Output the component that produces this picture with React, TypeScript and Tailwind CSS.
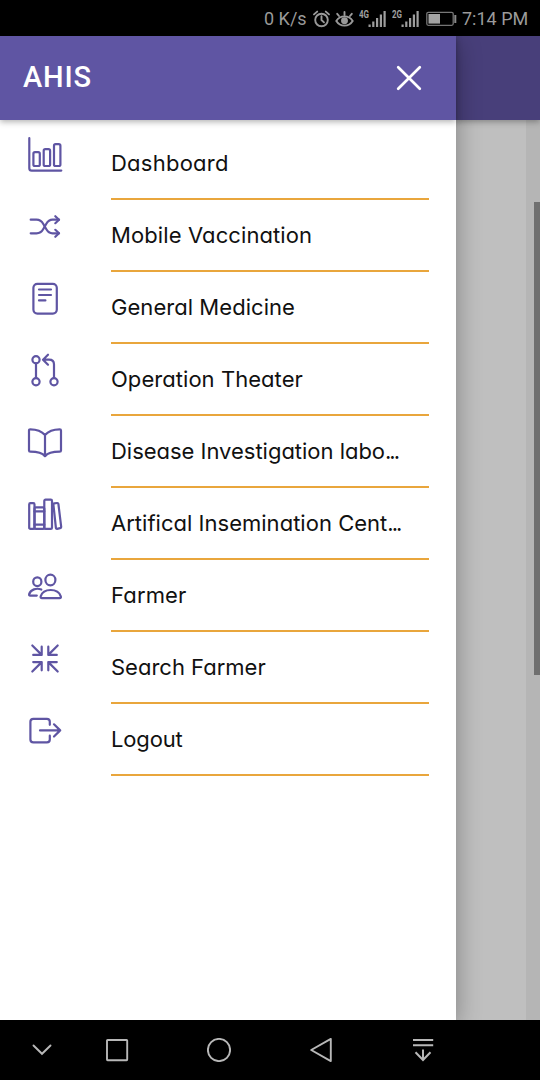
import type { ReactNode } from 'react';
import clsx from 'clsx';

type MenuItem = {
  label: string;
  truncated?: boolean;
  tracking: string;
  icon: ReactNode;
};

const menuItems: MenuItem[] = [
  {
    label: 'Dashboard',
    tracking: 'tracking-[0.24px]',
    icon: (
      <>
        <path d="M2.3 1.2V31.2Q2.3 33.6 4.7 33.6H34.3" />
        <rect x="6.4" y="15.2" width="6.4" height="13.8" rx="1.6" />
        <rect x="16.7" y="12.2" width="6.4" height="16.8" rx="1.6" />
        <rect x="27" y="7.2" width="6.4" height="21.8" rx="1.6" />
      </>
    ),
  },
  {
    label: 'Mobile Vaccination',
    tracking: 'tracking-[0.1px]',
    icon: (
      <>
        <path d="M3.7 10.7H9.5C13 10.7 14.8 12.3 16.3 15L19.2 20C20.7 22.6 22.5 24.3 25.5 24.3H32" />
        <path d="M3.7 24.3H9.5C13 24.3 14.8 22.7 16.3 20L19.2 15C20.7 12.4 22.5 10.7 25.5 10.7H32" />
        <path d="M28.3 7.2L32 10.7L28.3 14.2M28.3 20.8L32 24.3L28.3 27.8" />
      </>
    ),
  },
  {
    label: 'General Medicine',
    tracking: 'tracking-[0.05px]',
    icon: (
      <>
        <rect x="6.4" y="2.8" width="23.4" height="29.8" rx="4" />
        <path d="M12 8.5H24M12 14H24M12 19.4H18.4" />
      </>
    ),
  },
  {
    label: 'Operation Theater',
    tracking: 'tracking-[0.05px]',
    icon: (
      <>
        <circle cx="9" cy="6.7" r="3.6" />
        <circle cx="9" cy="28.7" r="3.6" />
        <circle cx="27" cy="28.7" r="3.6" />
        <path d="M9 10.3V25.1M27 25.1V11.5Q27 6.7 22 6.7H16.2M21 1.7L16 6.7L21 11.7" />
      </>
    ),
  },
  {
    label: 'Disease Investigation labo',
    truncated: true,
    tracking: 'tracking-[-0.02px]',
    icon: (
      <path d="M18 10C14.5 6 9 4.3 3.3 4.3Q2 4.3 2 5.6V25.4Q2 26.7 3.3 26.7C10 26.7 15 27.5 18 31.2C21 27.5 26 26.7 32.7 26.7Q34 26.7 34 25.4V5.6Q34 4.3 32.7 4.3C27 4.3 21.5 6 18 10ZM18 10V31" />
    ),
  },
  {
    label: 'Artifical Insemination Cent',
    truncated: true,
    tracking: 'tracking-[0.02px]',
    icon: (
      <>
        <rect x="2.2" y="6.2" width="5.3" height="25.7" rx="1.2" />
        <rect x="7.5" y="10.3" width="9.8" height="21.6" rx="1.2" />
        <path d="M7.5 14.3H17.3M7.5 27.7H17.3" />
        <rect x="17.3" y="2.7" width="7.7" height="29.2" rx="1.2" />
        <path d="M26.4 7.5Q26.2 6.4 27.3 6.3L30.2 6Q31.2 5.9 31.4 7L34.2 29.8Q34.3 31 33.2 31.2L30.1 31.8Q29 32 28.9 30.9Z" />
      </>
    ),
  },
  {
    label: 'Farmer',
    tracking: 'tracking-[0.15px]',
    icon: (
      <>
        <ellipse cx="10.3" cy="12.7" rx="4.1" ry="4.4" />
        <ellipse cx="23.4" cy="11" rx="5" ry="5.3" />
        <path d="M23.7 21C18.6 21 14.9 23.5 13.7 27.3Q13.2 29.2 15 29.2H32.6Q34.4 29.2 33.8 27.3C32.5 23.5 28.8 21 23.7 21Z" />
        <path d="M14.3 20.5C9.3 18.6 3.8 20.6 2.2 25Q1.7 26.6 3.2 26.6H9.8" />
      </>
    ),
  },
  {
    label: 'Search Farmer',
    tracking: 'tracking-normal',
    icon: (
      <>
        <path d="M5.3 4.5L14.7 13.9M14.7 5.7V13.9H6.2" />
        <path d="M30.7 4.5L21.3 13.9M21.3 5.7V13.9H29.8" />
        <path d="M5.3 30.5L14.7 21.1M14.7 29.3V21.1H6.2" />
        <path d="M30.7 30.5L21.3 21.1M21.3 29.3V21.1H29.8" />
      </>
    ),
  },
  {
    label: 'Logout',
    tracking: 'tracking-[-0.15px]',
    icon: (
      <>
        <path d="M22.8 11.8V8.7Q22.8 5.8 19.9 5.8H6.4Q3.4 5.8 3.4 8.7V26.4Q3.4 29.3 6.4 29.3H19.9Q22.8 29.3 22.8 26.4V22.7" />
        <path d="M13 17.4H33.2M27 11.3L33.2 17.4L27 23.5" />
      </>
    ),
  },
];

function Signal({ label }: { label: string }) {
  return (
    <svg viewBox="0 0 28 20" className="h-5 w-7 shrink-0" fill="#a0a0a0">
      <text x="0" y="9" fontSize="10" fontWeight="700" fontFamily="Roboto, sans-serif" textLength="10" lengthAdjust="spacingAndGlyphs">
        {label}
      </text>
      <rect x="9.5" y="15.5" width="2.2" height="2.5" />
      <rect x="13.2" y="12.5" width="2.2" height="5.5" />
      <rect x="17" y="9" width="2.2" height="9" />
      <rect x="20.8" y="5.5" width="2.2" height="12.5" />
      <rect x="24.5" y="2" width="2.2" height="16" />
    </svg>
  );
}

function StatusBar() {
  return (
    <div className="flex h-9 shrink-0 items-center bg-black pt-px pl-[264px] font-[Roboto,sans-serif] text-lg text-[#9b9b9b]">
      <span className="w-[48px] whitespace-nowrap">0 K/s</span>
      <svg viewBox="0 0 20 20" className="h-5 w-5 shrink-0" fill="none" stroke="#9b9b9b" strokeWidth="1.9" strokeLinecap="round">
        <circle cx="9.5" cy="11" r="6.3" />
        <path d="M9.5 7.2V11L12 13.4M2 5.4L5.2 2.6M17 5.4L13.8 2.6" />
      </svg>
      <svg viewBox="0 0 20 20" className="ml-[3px] h-5 w-5 shrink-0" fill="none" stroke="#9b9b9b" strokeWidth="1.9" strokeLinecap="round">
        <path d="M1.3 12C5.2 5.8 13.8 5.8 17.7 12C13.8 18.2 5.2 18.2 1.3 12Z" />
        <circle cx="9.5" cy="11.8" r="2.5" fill="#9b9b9b" />
        <path d="M9.5 6V3M4 7L2.2 4.8M15 7L16.8 4.8" />
      </svg>
      <div className="ml-1 flex gap-[5px]">
        <Signal label="4G" />
        <Signal label="2G" />
      </div>
      <svg viewBox="0 0 32 16" className="ml-[6px] h-4 w-8 shrink-0" fill="none">
        <rect x="0.8" y="1.3" width="26.4" height="13" rx="1.5" stroke="#777" strokeWidth="1.3" />
        <rect x="2.5" y="3" width="11.5" height="9.6" fill="#a5a5a5" />
        <rect x="28.3" y="4" width="2" height="8" fill="#8b8b8b" />
      </svg>
      <span className="ml-[4px] whitespace-nowrap">7:14 PM</span>
    </div>
  );
}

function DrawerItem({ item }: { item: MenuItem }) {
  return (
    <li className="flex h-[72px] pl-[27px]">
      <svg
        viewBox="0 0 36 36"
        className="mt-[9px] h-9 w-9 shrink-0"
        fill="none"
        stroke="#5f55a3"
        strokeWidth="2.2"
        strokeLinecap="round"
        strokeLinejoin="round"
      >
        {item.icon}
      </svg>
      <a
        href="#"
        className={clsx(
          'ml-12 h-[72px] w-[318px] overflow-hidden border-b-2 border-[#e9a63c] whitespace-nowrap',
          "font-[Inter,sans-serif] text-[22px] leading-[71px] text-[#111] [font-feature-settings:'cv11','ss03']",
          item.tracking,
        )}
      >
        {item.label}
        {item.truncated && <span className="tracking-[-2px]">...</span>}
      </a>
    </li>
  );
}

function NavBar() {
  return (
    <div className="flex h-[60px] shrink-0 items-center bg-black pl-[30px]">
      <svg viewBox="0 0 24 24" className="h-6 w-6" fill="none" stroke="#b8b8b8" strokeWidth="1.9" strokeLinecap="round">
        <path d="M3.5 7.5L12 15.8L20.5 7.5" />
      </svg>
      <svg viewBox="0 0 24 24" className="ml-[51px] h-6 w-6" fill="none" stroke="#b8b8b8" strokeWidth="1.9">
        <rect x="2" y="2" width="20.2" height="20.2" rx="0.6" />
      </svg>
      <svg viewBox="0 0 24 24" className="ml-[78px] h-6 w-6" fill="none" stroke="#b8b8b8" strokeWidth="1.9">
        <circle cx="12" cy="12" r="11.1" />
      </svg>
      <svg viewBox="0 0 24 24" className="ml-[78px] h-6 w-6" fill="none" stroke="#b8b8b8" strokeWidth="1.9" strokeLinejoin="round">
        <path d="M21.8 0.9V23.1L2.2 12Z" />
      </svg>
      <svg viewBox="0 0 24 24" className="ml-[78px] h-6 w-6" fill="none" stroke="#b8b8b8" strokeWidth="2">
        <path d="M2 2H22.2M2 7.2H22.2M12 11.5V22M4.5 14.3L12 22L19.5 14.3" />
      </svg>
    </div>
  );
}

export default function App() {
  return (
    <div className="flex h-[1080px] w-[540px] flex-col overflow-hidden bg-black">
      <StatusBar />

      <div className="flex min-h-0 flex-1">
        <aside className="z-10 flex w-[456px] shrink-0 flex-col bg-white shadow-[0_6px_24px_rgba(0,0,0,0.33)]">
          <header className="flex h-[84px] shrink-0 items-center justify-between bg-[#5f55a3] pr-[33px] pl-[23px] shadow-[0_2px_6px_rgba(0,0,0,0.3)]">
            <h1 className="-mt-px font-[Roboto,sans-serif] text-[29px] font-medium tracking-[0.8px] text-white">AHIS</h1>
            <button aria-label="Close">
              <svg viewBox="0 0 28 28" className="h-7 w-7" fill="none" stroke="white" strokeWidth="2.7" strokeLinecap="round">
                <path d="M3.2 3.2L24.8 24.8M24.8 3.2L3.2 24.8" />
              </svg>
            </button>
          </header>
          <ul className="mt-2">
            {menuItems.map((item) => (
              <DrawerItem key={item.label} item={item} />
            ))}
          </ul>
        </aside>

        {/* dimmed page behind the drawer */}
        <div className="flex flex-1 flex-col bg-[#bfbfbf]">
          <div className="z-[1] h-[84px] shrink-0 bg-[#483f7a] shadow-[0_2px_6px_rgba(0,0,0,0.3)]" />
          <div className="flex flex-1 justify-end">
            <div className="flex w-[14px] justify-end bg-[#b5b5b5] pt-[82px]">
              <div className="h-[473px] w-[6px] bg-[#6f6f6f]" />
            </div>
          </div>
        </div>
      </div>

      <div className="z-20">
        <NavBar />
      </div>
    </div>
  );
}
